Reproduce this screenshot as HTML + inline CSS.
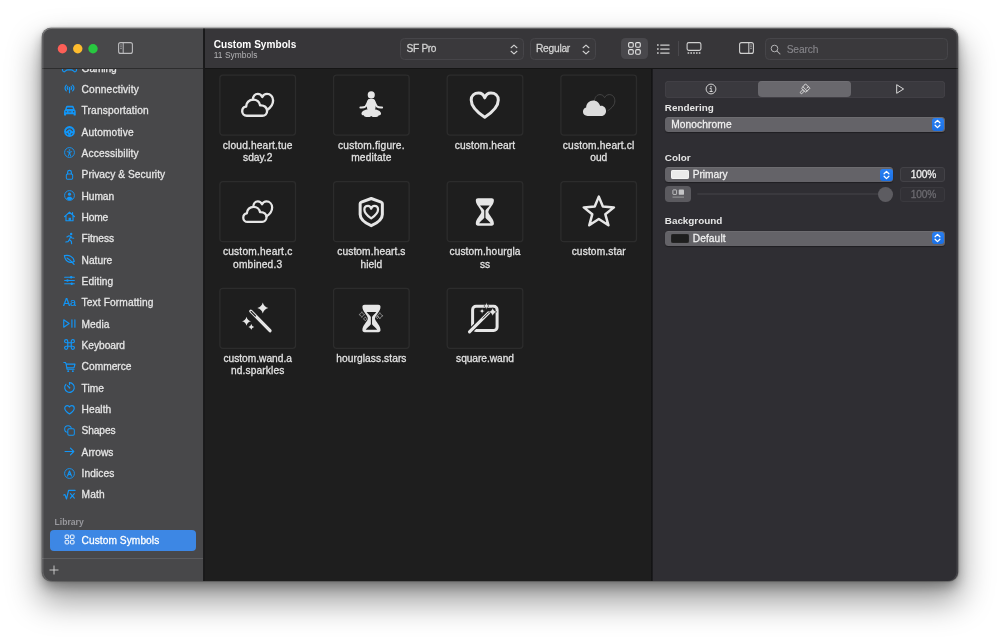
<!DOCTYPE html><html><head><meta charset="utf-8"><title>Custom Symbols</title><style>
*{box-sizing:border-box;margin:0;padding:0}
i{font-style:normal}
.row span,.lbl,.ipop,.tbpop,.fld{-webkit-text-stroke:.28px currentColor}
html,body{width:1000px;height:637px;overflow:hidden;background:#fff}
body{font-family:"Liberation Sans",sans-serif;font-size:10px;color:#e4e4e4;position:relative;-webkit-font-smoothing:antialiased}
.abs{position:absolute}
#win{will-change:transform;position:absolute;left:42px;top:28px;width:916px;height:552.8px;border-radius:9px;background:#1e1e1e;overflow:hidden;}
#shadow{position:absolute;left:42px;top:28px;width:916px;height:552.8px;border-radius:9px;box-shadow:0 18px 32px 3px rgba(0,0,0,.38),0 6px 12px rgba(0,0,0,.3),0 0 3px rgba(0,0,0,.3),0 0 0 .5px rgba(0,0,0,.3);}
#rim{position:absolute;left:42px;top:28px;width:916px;height:552.8px;border-radius:9px;box-shadow:inset 1.5px 0 0 rgba(255,255,255,.15),inset -1.5px 0 0 rgba(255,255,255,.1),inset 0 1px 0 rgba(255,255,255,.22);z-index:20;pointer-events:none}
#side{position:absolute;left:0;top:0;width:161.2px;height:553px;background:#48484a;z-index:2}
#sdiv{position:absolute;left:161px;top:0;width:2px;height:553px;background:linear-gradient(90deg,#3a3a3b 0,#1b1b1c 25%,#19191a 80%,#222223 100%);z-index:3}
#sidetop{position:absolute;left:0;top:0;width:161.2px;height:40.500px;border-bottom:1px solid #2d2d2e;background:#48484a;z-index:3}
.tl{position:absolute;top:16.2px;width:9.400px;height:9.400px;border-radius:50%}
.row{position:absolute;left:0;width:161px;height:21.300px;}
.row svg{position:absolute;left:20.600px;top:3.500px;width:13px;height:13px;overflow:visible}
.row span{position:absolute;left:39.600px;top:0;line-height:21.300px;font-size:10.200px;color:#e6e6e6;white-space:nowrap}
#tb{position:absolute;left:162px;top:0;right:0;height:40.500px;background:#373639;border-bottom:1px solid #151515}
#main{position:absolute;left:162px;top:41px;width:448px;bottom:0;background:#1e1e1e}
#insp{position:absolute;left:610.5px;top:41px;right:0;bottom:0;background:#2f2e33}
#idiv{position:absolute;left:609px;top:41px;width:2px;bottom:0;background:linear-gradient(90deg,#151516 0,#121213 50%,#252429 100%);z-index:3}
.tile{position:absolute;width:76.600px;height:61px;border:1px solid #303030;border-radius:3px;background:#1c1c1c}
.lbl{position:absolute;width:90px;text-align:center;font-size:10.200px;line-height:12.300px;color:#e2e2e2}
.tile svg{position:absolute;left:-1px;top:-1px;width:76.600px;height:61px;overflow:visible}
.pop{position:absolute;border-radius:4px;}
.tbpop{border:1px solid #464549;background:#3a393c;height:21.6px;top:10px;border-radius:4.5px;font-size:10.2px;line-height:19.6px;color:#d2d2d2}
.ipop{height:15px;background:#646368;border-radius:3.500px;font-size:10.200px;line-height:15px;color:#f0f0f0;box-shadow:0 .5px 0 rgba(255,255,255,.12) inset,0 .5px 1px rgba(0,0,0,.35)}
.ibtn{position:absolute;right:.9px;top:1.4px;width:12.4px;height:12.2px;border-radius:3px;background:linear-gradient(#2a80f2,#1a70e6)}
.ih{position:absolute;left:12.3px;font-size:9.900px;font-weight:bold;color:#e6e6e6;letter-spacing:0}
.fld{position:absolute;height:15px;border-radius:3px;background:#36353a;border:1px solid #434247;font-size:10.200px;line-height:14.600px;text-align:right;padding-right:8px;color:#f0f0f0}
</style></head><body>
<div id="shadow"></div><div id="win">
<div id="side">
<div class="row" style="top:29.5px"><svg viewBox="0 0 14 14"><path fill="none" stroke="#1296f7" stroke-width="1.25" stroke-linecap="round" stroke-linejoin="round" stroke-width="1.25" d="M-0.6 8C-0.8 10.5 0 11.7 1.300 11.7C2.600 11.7 3.200 9.500 5 9.500H9C10.800 9.500 11.400 11.7 12.700 11.7C14 11.7 14.800 10.5 14.600 8C14.300 5 13 2.500 11 2.500H3C1 2.500-.3 5-.6 8z"/></svg><span><i style="letter-spacing:-0.112px">Gaming</i></span></div>
<div class="row" style="top:50.9px"><svg viewBox="0 0 14 14"><path fill="none" stroke="#1296f7" stroke-width="1.25" stroke-linecap="round" stroke-linejoin="round" stroke-width="1" d="M7 6.300v5.200M5.200 4.800a2.300 2.300 0 0 0 0 3.200M8.800 4.800a2.300 2.300 0 0 1 0 3.200M3.600 3.300a4.600 4.600 0 0 0 0 6.200M10.400 3.300a4.600 4.600 0 0 1 0 6.200"/><circle cx="7" cy="6.400" r="0.900" fill="#1296f7"/></svg><span><i style="letter-spacing:0.158px">Connectivity</i></span></div>
<div class="row" style="top:72.2px"><svg viewBox="0 0 14 14"><g transform="translate(7.4 7.2) scale(1.086 1.11) translate(-7 -7.5)"><path fill="#1296f7" d="M1.2 11.6V8.2c0-.8.3-1.300.9-1.600l.9-2.500c.3-.9.9-1.300 1.900-1.300h4.200c1 0 1.600.4 1.900 1.300l.9 2.500c.6.3.9.8.9 1.600v3.400c0 .4-.2.600-.6.600h-.9c-.4 0-.6-.2-.6-.6v-.7H3.300v.7c0 .4-.2.600-.6.600h-.9c-.4 0-.6-.2-.6-.6zM3.900 5.900h6.200l-.4-1.100c-.1-.3-.3-.4-.6-.4H4.900c-.3 0-.5.100-.6.400zM3.300 9.300a.7.7 0 1 0 0-1.400.7.7 0 0 0 0 1.400zM10.700 9.300a.7.7 0 1 0 0-1.400.7.7 0 0 0 0 1.400zM5.600 9h2.800v-.7H5.600z" fill-rule="evenodd"/></g></svg><span><i style="letter-spacing:0.135px">Transportation</i></span></div>
<div class="row" style="top:93.5px"><svg viewBox="0 0 14 14"><circle cx="7" cy="7" r="5.85" fill="#1296f7"/><path d="M3.8 6.1A3.5 3.5 0 0 1 10.2 6.1" fill="none" stroke="#48484a" stroke-width="1.25" stroke-linecap="round"/><circle cx="7" cy="7.5" r=".75" fill="#48484a"/><path d="M4.300 9.100L5.200 10.200M9.700 9.100L8.800 10.200" stroke="#48484a" stroke-width="1.1" stroke-linecap="round"/></svg><span><i style="letter-spacing:0.113px">Automotive</i></span></div>
<div class="row" style="top:114.9px"><svg viewBox="0 0 14 14"><circle cx="7" cy="7" r="5.300" fill="none" stroke="#1296f7" stroke-width="1"/><circle cx="7" cy="4.300" r="0.900" fill="#1296f7"/><path fill="#1296f7" d="M4.200 5.600l2.100.3h1.400l2.100-.3v.9l-1.900.4v1.400l.9 2.600-.8.300-1-2.500-1 2.500-.8-.3.900-2.600V6.900l-1.900-.4z"/></svg><span><i style="letter-spacing:0.124px">Accessibility</i></span></div>
<div class="row" style="top:136.2px"><svg viewBox="0 0 14 14"><rect x="3.600" y="6.400" width="6.800" height="5.600" rx="1.100" fill="none" stroke="#1296f7" stroke-width="1.100"/><path fill="none" stroke="#1296f7" stroke-width="1.25" stroke-linecap="round" stroke-linejoin="round" d="M5 6.300V4.500a2 2 0 0 1 4 0v1.800"/></svg><span><i style="letter-spacing:0.052px">Privacy &amp; Security</i></span></div>
<div class="row" style="top:157.6px"><svg viewBox="0 0 14 14"><circle cx="7" cy="7" r="5.300" fill="none" stroke="#1296f7" stroke-width="1"/><circle cx="7" cy="5.600" r="1.700" fill="#1296f7"/><path fill="#1296f7" d="M3.700 10.600c.5-1.600 1.800-2.300 3.300-2.300s2.800.7 3.300 2.300c-.9.900-2 1.400-3.300 1.400s-2.400-.5-3.300-1.400z"/></svg><span><i style="letter-spacing:-0.089px">Human</i></span></div>
<div class="row" style="top:178.9px"><svg viewBox="0 0 14 14"><path fill="none" stroke="#1296f7" stroke-width="1.25" stroke-linecap="round" stroke-linejoin="round" d="M1.600 7.200L7 2.400l5.400 4.800M3.200 6.200v5.400h7.600V6.200M10.300 4.800V2.900"/><path fill="#1296f7" d="M6 11.600V8.300h2.600v3.300z"/></svg><span><i style="letter-spacing:-0.172px">Home</i></span></div>
<div class="row" style="top:200.2px"><svg viewBox="0 0 14 14"><circle cx="8.8" cy="2.2" r="1.3" fill="#1296f7"/><path fill="none" stroke="#1296f7" stroke-width="1.25" stroke-linecap="round" stroke-linejoin="round" stroke-width="1.45" d="M4.2 5.4l2.3-1.300 1.9.7-1.5 3.4 2 1.7.4 2.7M6.9 8.2L5.6 10.3l-2.600.5M8.4 4.8l1.2 1.7 1.9.2"/></svg><span><i style="letter-spacing:-0.063px">Fitness</i></span></div>
<div class="row" style="top:221.6px"><svg viewBox="0 0 14 14"><path fill="none" stroke="#1296f7" stroke-width="1.25" stroke-linecap="round" stroke-linejoin="round" d="M1.5 2.9c4.8-1 9.6.4 10.7 6-1.2 1-3.7 1.5-5.6.9C4 9 2 6.5 1.5 2.900zM4.3 5.4c2.7 1.5 5.3 3.7 7.600 6.9"/></svg><span><i style="letter-spacing:0.004px">Nature</i></span></div>
<div class="row" style="top:242.9px"><svg viewBox="0 0 14 14"><path fill="none" stroke="#1296f7" stroke-width="1.25" stroke-linecap="round" stroke-linejoin="round" d="M1.800 3.500h10.400M1.800 7h10.400M1.800 10.500h10.400"/><circle cx="8.800" cy="3.500" r="1.300" fill="#1296f7"/><circle cx="4.800" cy="7" r="1.300" fill="#1296f7"/><circle cx="9.400" cy="10.500" r="1.300" fill="#1296f7"/></svg><span><i style="letter-spacing:0.063px">Editing</i></span></div>
<div class="row" style="top:264.2px"><svg viewBox="0 0 14 14"><text x="7" y="11.2" text-anchor="middle" font-family="Liberation Sans, sans-serif" font-size="11.5" fill="#1296f7" stroke="#1296f7" stroke-width=".25">Aa</text></svg><span><i style="letter-spacing:0.113px">Text Formatting</i></span></div>
<div class="row" style="top:285.6px"><svg viewBox="0 0 14 14"><path fill="none" stroke="#1296f7" stroke-width="1.25" stroke-linecap="round" stroke-linejoin="round" d="M.8 3l5.8 4-5.8 4z"/><path fill="none" stroke="#1296f7" stroke-width="1.25" stroke-linecap="round" stroke-linejoin="round" stroke-width="1.4" d="M9.6 3v8M12.8 3v8"/></svg><span><i style="letter-spacing:-0.010px">Media</i></span></div>
<div class="row" style="top:306.9px"><svg viewBox="0 0 14 14"><path fill="none" stroke="#1296f7" stroke-width="1.25" stroke-linecap="round" stroke-linejoin="round" stroke-width="1.15" d="M5.1 5.1h3.8v3.8H5.1zM5.1 5.1V3.4a1.7 1.7 0 1 0-1.7 1.7zM8.9 5.1V3.4a1.7 1.7 0 1 1 1.7 1.7zM5.1 8.9v1.7a1.7 1.7 0 1 1-1.7-1.7zM8.9 8.9v1.7a1.7 1.7 0 1 0 1.7-1.7z"/></svg><span><i style="letter-spacing:-0.041px">Keyboard</i></span></div>
<div class="row" style="top:328.3px"><svg viewBox="0 0 14 14"><path fill="none" stroke="#1296f7" stroke-width="1.25" stroke-linecap="round" stroke-linejoin="round" stroke-width="1.3" d="M.9 2.7h1.7l.8 1.7h9.5l-1 3.9H4.2M3.4 4.4l1 5.6h7.5"/><circle cx="5.6" cy="12" r="1.05" fill="#1296f7"/><circle cx="10.600" cy="12" r="1.05" fill="#1296f7"/></svg><span><i style="letter-spacing:0.009px">Commerce</i></span></div>
<div class="row" style="top:349.6px"><svg viewBox="0 0 14 14"><path fill="none" stroke="#1296f7" stroke-width="1.25" stroke-linecap="round" stroke-linejoin="round" d="M7 1.8a5.2 5.2 0 1 1-3.9 1.76"/><path fill="none" stroke="#1296f7" stroke-width="1.25" stroke-linecap="round" stroke-linejoin="round" d="M7 1.8v2.1M7 7.2L4.7 4.9"/><circle cx="7" cy="7.2" r=".9" fill="#1296f7"/></svg><span><i style="letter-spacing:-0.016px">Time</i></span></div>
<div class="row" style="top:371.0px"><svg viewBox="0 0 14 14"><path fill="none" stroke="#1296f7" stroke-width="1.25" stroke-linecap="round" stroke-linejoin="round" d="M7 11.800C3.600 9.600 1.900 7.700 1.900 5.600c0-1.600 1.200-2.800 2.700-2.800 1 0 1.900.5 2.400 1.400.5-.9 1.400-1.400 2.400-1.400 1.500 0 2.700 1.200 2.700 2.800 0 2.100-1.700 4-5.100 6.200z"/></svg><span><i style="letter-spacing:0.024px">Health</i></span></div>
<div class="row" style="top:392.3px"><svg viewBox="0 0 14 14"><circle cx="5.400" cy="5.400" r="3.600" fill="none" stroke="#1296f7" stroke-width="1.100"/><rect x="5.200" y="5.200" width="7" height="7" rx="1.400" fill="#48484a" stroke="#1296f7" stroke-width="1.100"/></svg><span><i style="letter-spacing:-0.127px">Shapes</i></span></div>
<div class="row" style="top:413.6px"><svg viewBox="0 0 14 14"><path fill="none" stroke="#1296f7" stroke-width="1.25" stroke-linecap="round" stroke-linejoin="round" d="M2.200 7h9.400M8 3.400L11.600 7 8 10.600"/></svg><span><i style="letter-spacing:0.033px">Arrows</i></span></div>
<div class="row" style="top:435.0px"><svg viewBox="0 0 14 14"><circle cx="7" cy="7" r="5.300" fill="none" stroke="#1296f7" stroke-width="1"/><path fill="none" stroke="#1296f7" stroke-width="1.25" stroke-linecap="round" stroke-linejoin="round" stroke-width="1" d="M4.900 9.600L7 4.300l2.100 5.300M5.600 8h2.800"/></svg><span><i style="letter-spacing:0.074px">Indices</i></span></div>
<div class="row" style="top:456.3px"><svg viewBox="0 0 14 14"><path fill="none" stroke="#1296f7" stroke-width="1.25" stroke-linecap="round" stroke-linejoin="round" d="M.8 7.6l1.3-.5 1.7 4.7L6 2.6h7"/><path fill="none" stroke="#1296f7" stroke-width="1.25" stroke-linecap="round" stroke-linejoin="round" stroke-width="1.1" d="M8 6l4.2 4.9M12.2 6L8 10.9"/></svg><span><i style="letter-spacing:0.136px">Math</i></span></div>
<div class="abs" style="left:12.500px;top:489.300px;font-size:8.600px;color:#98989d;font-weight:bold"><i style="letter-spacing:0.008px">Library</i></div>
<div class="abs" style="left:8px;top:501.500px;width:146px;height:21.500px;border-radius:4px;background:#3d87e4"></div>
<div class="row" style="top:501.800px"><svg viewBox="0 0 14 14"><g fill="none" stroke="#fff" stroke-width="1.05"><rect x="2.3" y="2.2" width="3.9" height="3.9" rx=".9"/><rect x="8" y="2.2" width="3.9" height="3.9" rx=".9"/><rect x="2.3" y="7.9" width="3.9" height="3.9" rx=".9"/><rect x="8" y="7.9" width="3.9" height="3.9" rx=".9"/></g></svg><span style="color:#fff"><i style="letter-spacing:0.050px">Custom Symbols</i></span></div>
<div class="abs" style="left:0;top:530.400px;width:161px;height:1px;background:#5c5c5e"></div>
<svg class="abs" style="left:6.600px;top:537px;width:10px;height:10px" viewBox="0 0 10 10"><path d="M5 .9v8.200M.9 5h8.200" stroke="#dadada" stroke-width=".85" fill="none" stroke-linecap="round"/></svg>
</div>
<div id="sidetop">
<svg class="abs" style="left:10px;top:10px;width:60px;height:22px" viewBox="0 0 60 22"><circle cx="10.4" cy="10.7" r="4.7" fill="#fd5f57"/><circle cx="25.75" cy="10.7" r="4.7" fill="#febc2e"/><circle cx="41" cy="10.7" r="4.700" fill="#28c840"/></svg>
<svg class="abs" style="left:75.500px;top:14px;width:15px;height:12px" viewBox="0 0 15 12"><rect x=".6" y=".6" width="13.800" height="10.800" rx="2" fill="none" stroke="#bcbcbe" stroke-width="1.100"/><path d="M5.200.6v10.800" stroke="#bcbcbe" stroke-width="1"/><path d="M2.200 3h1.600M2.200 4.800h1.600M2.200 6.600h1.600" stroke="#bcbcbe" stroke-width=".7"/></svg>
</div>
<div id="tb">
<div class="abs" style="left:9.7px;top:10.7px;font-size:10.05px;font-weight:bold;color:#fff;white-space:nowrap"><i style="letter-spacing:0.037px">Custom Symbols</i></div>
<div class="abs" style="left:9.700px;top:21.500px;font-size:8.400px;color:#b4b4b6;white-space:nowrap"><i style="letter-spacing:0.066px">11 Symbols</i></div>
<div class="pop tbpop" style="left:196px;width:123.500px;padding-left:5.6px"><i style="letter-spacing:-0.351px">SF Pro</i><svg class="abs" style="right:4.8px;top:4.5px;width:8px;height:11px" viewBox="0 0 8 11"><path d="M1.1 3.7L4 1.1l2.9 2.6M1.1 7.3L4 9.9l2.9-2.600" fill="none" stroke="#d0d0d0" stroke-width="1.15" stroke-linecap="round" stroke-linejoin="round"/></svg></div>
<div class="pop tbpop" style="left:326px;width:66px;padding-left:5px"><i style="letter-spacing:-0.241px">Regular</i><svg class="abs" style="right:4.8px;top:4.5px;width:8px;height:11px" viewBox="0 0 8 11"><path d="M1.1 3.7L4 1.1l2.9 2.6M1.1 7.3L4 9.9l2.9-2.600" fill="none" stroke="#d0d0d0" stroke-width="1.15" stroke-linecap="round" stroke-linejoin="round"/></svg></div>
<div class="abs" style="left:416.900px;top:10.200px;width:27.200px;height:20.700px;border-radius:4.500px;background:#49484c"></div>
<svg class="abs" style="left:424px;top:13.900px;width:13px;height:13px" viewBox="0 0 13 13"><g fill="none" stroke="#e4e4e4" stroke-width="1.100"><rect x=".65" y=".65" width="4.600" height="4.600" rx="1.200"/><rect x="7.650" y=".65" width="4.600" height="4.600" rx="1.200"/><rect x=".65" y="7.650" width="4.600" height="4.600" rx="1.200"/><rect x="7.650" y="7.650" width="4.600" height="4.600" rx="1.200"/></g></svg>
<svg class="abs" style="left:452px;top:13.500px;width:14px;height:14px" viewBox="0 0 14 14"><path d="M4.700 3h8.400M4.700 7h8.400M4.700 11h8.400" stroke="#d0d0d0" stroke-width="1.250" stroke-linecap="round"/><rect x="1" y="2.200" width="1.700" height="1.600" rx=".4" fill="#d0d0d0"/><rect x="1" y="6.200" width="1.700" height="1.600" rx=".4" fill="#d0d0d0"/><rect x="1" y="10.200" width="1.700" height="1.600" rx=".4" fill="#d0d0d0"/></svg>
<div class="abs" style="left:473.800px;top:13px;width:1px;height:15px;background:#4a494d"></div>
<svg class="abs" style="left:481.800px;top:13.200px;width:16px;height:14px" viewBox="0 0 16 14"><rect x="1.100" y="1.600" width="13.800" height="7.800" rx="1.600" fill="none" stroke="#d0d0d0" stroke-width="1.100"/><path d="M1.600 12h1.600M4.400 12h1.600M7.200 12h1.600M10 12h1.600M12.800 12h1.600" stroke="#d0d0d0" stroke-width="1.300"/></svg>
<svg class="abs" style="left:534.500px;top:14px;width:15px;height:12px" viewBox="0 0 15 12"><rect x=".6" y=".6" width="13.800" height="10.800" rx="2" fill="none" stroke="#d0d0d0" stroke-width="1.100"/><path d="M9.800.6v10.800" stroke="#d0d0d0" stroke-width="1"/><path d="M11.200 3h1.600M11.200 4.800h1.600M11.200 6.600h1.600" stroke="#d0d0d0" stroke-width=".7"/></svg>
<div class="pop tbpop" style="left:561.200px;width:183px;padding-left:20.5px;line-height:22.4px;color:#87868b;-webkit-text-stroke:.1px #87868b"><i style="letter-spacing:-0.114px">Search</i><svg class="abs" style="left:3.6px;top:4.5px;width:11px;height:11px" viewBox="0 0 11 11"><circle cx="4.5" cy="4.5" r="3.3" fill="none" stroke="#b2b2b4" stroke-width="1"/><path d="M7 7l3 3" stroke="#b2b2b4" stroke-width="1.05" stroke-linecap="round"/></svg></div>
</div>
<div id="main">
<div class="lbl" style="left:8.7px;top:70.7px"><i style="letter-spacing:0.153px">cloud.heart.tue</i><br><i style="letter-spacing:0.006px">sday.2</i></div>
<div class="lbl" style="left:122.4px;top:70.7px"><i style="letter-spacing:0.194px">custom.figure.</i><br><i style="letter-spacing:0.153px">meditate</i></div>
<div class="lbl" style="left:236.0px;top:70.7px"><i style="letter-spacing:0.151px">custom.heart</i></div>
<div class="lbl" style="left:349.7px;top:70.7px"><i style="letter-spacing:0.175px">custom.heart.cl</i><br><i style="letter-spacing:-0.100px">oud</i></div>
<div class="lbl" style="left:8.7px;top:177.3px"><i style="letter-spacing:0.192px">custom.heart.c</i><br><i style="letter-spacing:0.191px">ombined.3</i></div>
<div class="lbl" style="left:122.4px;top:177.3px"><i style="letter-spacing:0.113px">custom.heart.s</i><br><i style="letter-spacing:0.054px">hield</i></div>
<div class="lbl" style="left:236.0px;top:177.3px"><i style="letter-spacing:0.103px">custom.hourgla</i><br><i style="letter-spacing:-0.144px">ss</i></div>
<div class="lbl" style="left:349.7px;top:177.3px"><i style="letter-spacing:0.131px">custom.star</i></div>
<div class="lbl" style="left:8.7px;top:283.9px"><i style="letter-spacing:0.005px">custom.wand.a</i><br><i style="letter-spacing:0.126px">nd.sparkles</i></div>
<div class="lbl" style="left:122.4px;top:283.9px"><i style="letter-spacing:0.080px">hourglass.stars</i></div>
<div class="lbl" style="left:236.0px;top:283.9px"><i style="letter-spacing:-0.049px">square.wand</i></div>
<svg class="abs" style="left:0;top:0;width:448px;height:400px" viewBox="0 0 448 400"><g transform="translate(15.40 5.60)"><rect x=".5" y=".5" width="75.600" height="60" rx="2.800" fill="none" stroke="#2c2c2c" stroke-width="1.300"/><path fill="none" stroke="#e6e6e6" stroke-width="2.4" stroke-linecap="round" stroke-linejoin="round" d="M33.5 25.0C33.6 21.8 35.5 19.300 38.4 19.300C40.3 19.300 41.9 20.4 42.9 22.4C43.9 20.4 45.6 19.300 47.6 19.300C51 19.300 53.7 22 53.7 25.800C53.7 29.5 51.6 32.6 47.7 35.300"/><path fill="none" stroke="#e6e6e6" stroke-width="2.4" stroke-linecap="round" stroke-linejoin="round" d="M27.3 41.1H43C45.6 41.1 47.7 39 47.7 36.300C47.7 33 45 30.4 40.700 30.8C40.2 27.4 37.4 25 33.8 25C29.8 25 26.8 28 26.700 32C24.4 32.3 22.8 34.2 22.8 36.6C22.8 39.1 24.8 41.1 27.3 41.1z"/></g><g transform="translate(129.05 5.60)"><rect x=".5" y=".5" width="75.600" height="60" rx="2.800" fill="none" stroke="#2c2c2c" stroke-width="1.300"/><circle cx="38.2" cy="20.3" r="3.55" fill="#e6e6e6"/><path fill="#e6e6e6" d="M35.4 24.9C36.6 23.8 39.8 23.8 41 24.9C42.3 26.2 42.6 29 42.6 31.5C42.6 33.4 42.2 34.9 41.6 36H34.8C34.2 34.9 33.8 33.4 33.8 31.5C33.8 29 34.1 26.2 35.4 24.9z"/><path fill="none" stroke="#e6e6e6" stroke-width="2.1" stroke-linecap="round" stroke-linejoin="round" d="M36 25.6C34.4 27.6 34 30.4 32.4 31.9C31.2 32.9 29.300 33 27.4 32.9M40.4 25.6C42 27.600 42.4 30.4 44 31.900C45.2 32.9 47.1 33 49 32.9"/><path fill="#e6e6e6" d="M33.3 34.9C30.8 35.6 28.4 37 28.4 38.9C28.4 40.2 29.4 40.9 30.7 40.7C31 41.800 32 42.3 33.2 42.3H36.600C37.3 42.3 37.900 42.0 38.2 41.5C38.5 42.0 39.100 42.3 39.8 42.3H43.2C44.4 42.3 45.4 41.800 45.7 40.7C47 40.9 48 40.200 48 38.9C48 37 45.600 35.6 43.1 34.9z"/></g><g transform="translate(242.70 5.60)"><rect x=".5" y=".5" width="75.600" height="60" rx="2.800" fill="none" stroke="#2c2c2c" stroke-width="1.300"/><path fill="none" stroke="#e6e6e6" stroke-width="3.0" stroke-linecap="round" stroke-linejoin="round" d="M38.05 42.70C33.98 40.03 24.50 33.22 24.50 25.45C24.50 21.07 27.75 18.40 31.82 18.40C34.53 18.40 36.97 19.86 38.05 23.30C39.13 19.86 41.57 18.40 44.28 18.40C48.35 18.40 51.60 21.07 51.60 25.45C51.60 33.22 42.11 40.03 38.05 42.70z"/></g><g transform="translate(356.35 5.60)"><rect x=".5" y=".5" width="75.600" height="60" rx="2.800" fill="none" stroke="#2c2c2c" stroke-width="1.300"/><path fill="none" stroke="#4e4e4e" stroke-width=".8" d="M34.2 26.5C34.2 22.9 36.4 20 39.6 20C41.6 20 43.3 21.1 44.3 23C45.3 21.1 47 20 49 20C52.2 20 54.5 22.700 54.5 26.2C54.5 29.9 52.2 33 47.3 36.2"/><path fill="#dcdcdc" d="M27.2 41.4H41.1C43.7 41.4 45.7 39.2 45.7 36.4C45.7 33.5 43.6 31.2 41 31.2C40.6 31.2 40.2 31.25 39.8 31.35C38.800 28.2 36.1 26 32.9 26C28.9 26 25.9 29.1 25.8 33C23.9 33.5 22.6 35.2 22.6 37.2C22.6 39.5 24.6 41.4 27.2 41.4z"/></g><g transform="translate(15.40 112.20)"><rect x=".5" y=".5" width="75.600" height="60" rx="2.800" fill="none" stroke="#2c2c2c" stroke-width="1.300"/><g transform="translate(38.3 30.4) scale(.935) translate(-38.25 -30.15)"><path fill="none" stroke="#e6e6e6" stroke-width="2.4" stroke-linecap="round" stroke-linejoin="round" d="M33.5 25.0C33.6 21.8 35.5 19.300 38.4 19.300C40.3 19.300 41.9 20.4 42.9 22.4C43.9 20.4 45.6 19.300 47.6 19.300C51 19.300 53.7 22 53.7 25.800C53.7 29.5 51.6 32.6 47.7 35.300"/><path fill="none" stroke="#e6e6e6" stroke-width="2.4" stroke-linecap="round" stroke-linejoin="round" d="M27.3 41.1H43C45.6 41.1 47.7 39 47.7 36.300C47.7 33 45 30.4 40.700 30.8C40.2 27.4 37.4 25 33.8 25C29.8 25 26.8 28 26.700 32C24.4 32.3 22.8 34.2 22.8 36.6C22.8 39.1 24.8 41.1 27.3 41.1z"/></g></g><g transform="translate(129.05 112.20)"><rect x=".5" y=".5" width="75.600" height="60" rx="2.800" fill="none" stroke="#2c2c2c" stroke-width="1.300"/><path fill="none" stroke="#e6e6e6" stroke-width="3.0" stroke-linecap="round" stroke-linejoin="round" stroke-linejoin="round" d="M38.2 17.300L48.1 20.9C48.9 21.2 49.300 21.8 49.300 22.6V33.2C49.300 37.6 45.4 41.2 38.2 44.5C31 41.2 27.1 37.6 27.1 33.2V22.6C27.1 21.8 27.5 21.2 28.3 20.9z"/><path fill="none" stroke="#e6e6e6" stroke-width="2.25" stroke-linecap="round" stroke-linejoin="round" d="M38.15 37.20C36.09 35.83 31.30 32.33 31.30 28.32C31.30 26.07 32.94 24.70 35.00 24.70C36.37 24.70 37.60 25.45 38.15 27.40C38.70 25.45 39.93 24.70 41.30 24.70C43.36 24.70 45.00 26.07 45.00 28.32C45.00 32.33 40.20 35.83 38.15 37.20z"/></g><g transform="translate(242.70 112.20)"><rect x=".5" y=".5" width="75.600" height="60" rx="2.800" fill="none" stroke="#2c2c2c" stroke-width="1.300"/><path fill="#e6e6e6" fill-rule="evenodd" d="M31.30 16.95H45.00C46.40 16.95 47.20 17.85 47.20 19.15C47.20 23.85 42.60 26.85 41.60 30.70C42.60 34.55 47.20 37.55 47.20 42.25C47.20 43.55 46.40 44.45 45.00 44.45H31.30C29.90 44.45 29.10 43.55 29.10 42.25C29.10 37.55 33.70 34.55 34.70 30.70C33.70 26.85 29.10 23.85 29.10 19.15C29.10 17.85 29.90 16.95 31.30 16.95zM33.30 24.35H43.00C41.60 26.35 39.20 27.95 38.75 29.35V36.55C39.60 38.15 42.60 39.95 43.90 41.95H32.40C33.70 39.95 36.70 38.15 37.55 36.55V29.35C37.10 27.95 34.70 26.35 33.30 24.35z"/></g><g transform="translate(356.35 112.20)"><rect x=".5" y=".5" width="75.600" height="60" rx="2.800" fill="none" stroke="#2c2c2c" stroke-width="1.300"/><path fill="none" stroke="#e6e6e6" stroke-width="2.5" stroke-linecap="round" stroke-linejoin="round" d="M38.45 15.4L42.5 25.3L53.6 26.2L45 33.1L48.1 44.1L38.45 37.800L28.9 44.1L31.9 33.1L23.4 26.200L34.4 25.3z"/></g><g transform="translate(15.40 218.80)"><rect x=".5" y=".5" width="75.600" height="60" rx="2.800" fill="none" stroke="#2c2c2c" stroke-width="1.300"/><path d="M31.4 23.4L50.6 42.9" stroke="#e6e6e6" stroke-width="3.300" stroke-linecap="round" fill="none"/><path d="M31.7 23.7L36.1 28.2" stroke="#1e1e1e" stroke-width="1.100" stroke-linecap="round" fill="none"/><path fill="#e6e6e6" d="M43.40 14.80Q44.50 19.20 48.90 20.30Q44.50 21.40 43.40 25.80Q42.30 21.40 37.90 20.30Q42.30 19.20 43.40 14.80zM27.10 29.00Q28.00 32.60 31.60 33.50Q28.00 34.40 27.10 38.00Q26.20 34.40 22.60 33.50Q26.20 32.60 27.10 29.00zM31.90 36.20Q32.48 38.52 34.80 39.10Q32.48 39.68 31.90 42.00Q31.32 39.68 29.00 39.10Q31.32 38.52 31.90 36.20z"/></g><g transform="translate(129.05 218.80)"><rect x=".5" y=".5" width="75.600" height="60" rx="2.800" fill="none" stroke="#2c2c2c" stroke-width="1.300"/><path fill="#e6e6e6" fill-rule="evenodd" d="M31.55 16.85H45.25C46.65 16.85 47.45 17.75 47.45 19.05C47.45 23.75 42.85 26.75 41.85 30.60C42.85 34.45 47.45 37.45 47.45 42.15C47.45 43.45 46.65 44.35 45.25 44.35H31.55C30.15 44.35 29.35 43.45 29.35 42.15C29.35 37.45 33.95 34.45 34.95 30.60C33.95 26.75 29.35 23.75 29.35 19.05C29.35 17.75 30.15 16.85 31.55 16.85zM33.55 24.25H43.25C41.85 26.25 39.45 27.85 39.00 29.25V36.45C39.85 38.05 42.85 39.85 44.15 41.85H32.65C33.95 39.85 36.95 38.05 37.80 36.45V29.25C37.35 27.85 34.95 26.25 33.55 24.25z"/><path fill="none" stroke="#a8a8a8" stroke-width=".65" d="M28.80 23.90Q29.38 26.22 31.70 26.80Q29.38 27.38 28.80 29.70Q28.22 27.38 25.90 26.80Q28.22 26.22 28.80 23.90zM32.30 29.00Q32.72 30.68 34.40 31.10Q32.72 31.52 32.30 33.20Q31.88 31.52 30.20 31.10Q31.88 30.68 32.30 29.00zM46.80 24.80Q47.44 27.36 50.00 28.00Q47.44 28.64 46.80 31.20Q46.16 28.64 43.60 28.00Q46.16 27.36 46.80 24.80zM44.30 27.80Q44.62 29.08 45.90 29.40Q44.62 29.72 44.30 31.00Q43.98 29.72 42.70 29.40Q43.98 29.08 44.30 27.80z"/></g><g transform="translate(242.70 218.80)"><rect x=".5" y=".5" width="75.600" height="60" rx="2.800" fill="none" stroke="#2c2c2c" stroke-width="1.300"/><rect x="25.9" y="18.500" width="24.5" height="24.1" rx="3.400" fill="none" stroke="#e6e6e6" stroke-width="3.0" stroke-linecap="round" stroke-linejoin="round"/><path d="M22.8 44.1L42.1 24.8" stroke="#1e1e1e" stroke-width="5.200" stroke-linecap="round" fill="none"/><path d="M22.8 44.1L42.1 24.8" stroke="#e6e6e6" stroke-width="3.100" stroke-linecap="round" fill="none"/><path d="M36.3 30.5L41.7 25.1" stroke="#1e1e1e" stroke-width="1.000" stroke-linecap="round" fill="none"/><path fill="#e6e6e6" stroke="#1e1e1e" stroke-width=".5" d="M39.70 14.60Q40.22 17.48 42.30 18.20Q40.22 18.92 39.70 21.80Q39.18 18.92 37.10 18.20Q39.18 17.48 39.70 14.60zM35.40 20.70Q35.92 22.78 38.00 23.30Q35.92 23.82 35.40 25.90Q34.88 23.82 32.80 23.30Q34.88 22.78 35.40 20.70zM46.00 19.90Q46.84 23.26 50.20 24.10Q46.84 24.94 46.00 28.30Q45.16 24.94 41.80 24.10Q45.16 23.26 46.00 19.90z"/></g></svg>
</div>
<div id="sdiv"></div><div id="idiv"></div><div id="insp">
<div class="abs" style="left:12.5px;top:12px;width:280px;height:16.500px;border-radius:4px;background:#3a393e;box-shadow:0 0 0 .5px #48474c inset"></div>
<div class="abs" style="left:105.500px;top:12.200px;width:93px;height:16.100px;border-radius:4px;background:#69686d;box-shadow:0 .5px 0 rgba(255,255,255,.1) inset"></div>
<svg class="abs" style="left:52.400px;top:14.200px;width:12px;height:12px" viewBox="0 0 12 12"><circle cx="6" cy="6" r="4.900" fill="none" stroke="#e0e0e0" stroke-width=".9"/><circle cx="6" cy="3.700" r=".75" fill="#e0e0e0"/><path d="M5.100 5.400h1.100v3M4.900 8.500h2.400" stroke="#e0e0e0" stroke-width=".9" fill="none" stroke-linecap="round" stroke-linejoin="round"/></svg>
<svg class="abs" style="left:144.700px;top:14.200px;width:14px;height:14px;overflow:visible" viewBox="0 0 14 14"><g transform="translate(7.200 6.800) rotate(45) scale(.84) translate(-6 -7.100)" fill="none" stroke="#e0e0e0" stroke-width="1.050" stroke-linejoin="round" stroke-linecap="round"><path d="M2.500 1h7v6.300a.8.800 0 0 1-.8.800H3.300a.8.800 0 0 1-.8-.8z"/><path d="M2.500 5.600h7M6.900 1v2.300M4.800 8.100v3.700a1.200 1.200 0 0 0 2.400 0V8.100"/></g></svg>
<svg class="abs" style="left:241.500px;top:14.200px;width:12px;height:12px" viewBox="0 0 12 12"><path d="M2.700 1.700v8.600l6.900-4.300z" fill="none" stroke="#e0e0e0" stroke-width=".95" stroke-linejoin="round"/></svg>
<div class="ih" style="top:32.700px"><i style="letter-spacing:0.017px">Rendering</i></div>
<div class="pop ipop" style="left:12.5px;top:48px;width:280px;padding-left:6.200px"><i style="letter-spacing:0.103px">Monochrome</i><div class="ibtn"><svg style="position:absolute;left:2.7px;top:1.1px;width:7px;height:10px" viewBox="0 0 7 10"><path d="M1.1 3.8L3.5 1.400l2.400 2.400M1.1 6.2L3.5 8.600l2.400-2.400" fill="none" stroke="#fff" stroke-width="1.25" stroke-linecap="round" stroke-linejoin="round"/></svg></div></div>
<div class="ih" style="top:82.900px"><i style="letter-spacing:0.021px">Color</i></div>
<div class="pop ipop" style="left:12.5px;top:98.200px;width:228.4px;padding-left:27.700px"><div class="abs" style="left:6px;top:3px;width:17.8px;height:9.2px;border-radius:2.200px;background:#ebebeb;box-shadow:0 0 0 .5px #fff inset"></div><i style="letter-spacing:-0.013px">Primary</i><div class="ibtn"><svg style="position:absolute;left:2.7px;top:1.1px;width:7px;height:10px" viewBox="0 0 7 10"><path d="M1.1 3.8L3.5 1.400l2.400 2.400M1.1 6.2L3.5 8.600l2.400-2.400" fill="none" stroke="#fff" stroke-width="1.25" stroke-linecap="round" stroke-linejoin="round"/></svg></div></div>
<div class="fld" style="left:247.700px;top:98.200px;width:45px"><i style="letter-spacing:-0.141px">100%</i></div>
<div class="abs" style="left:12.5px;top:117.200px;width:26px;height:15.500px;border-radius:3.800px;background:#5b5a5f"></div>
<svg class="abs" style="left:19.600px;top:120px;width:13px;height:10px" viewBox="0 0 13 10"><rect x=".9" y=".9" width="3.700" height="4.500" rx=".5" fill="none" stroke="#c8c8ca" stroke-width=".9"/><rect x="6.700" y=".5" width="5.300" height="5.300" rx=".9" fill="#c4c4c6"/><path d="M.5 8.100h11.500" stroke="#a8a8aa" stroke-width=".8"/></svg>
<div class="abs" style="left:44.500px;top:124px;width:196px;height:1.800px;border-radius:1px;background:#3a393e"></div>
<div class="abs" style="left:225.300px;top:117.600px;width:15.200px;height:15.200px;border-radius:50%;background:#5d5c61"></div>
<div class="fld" style="left:247.700px;top:117.500px;width:45px;color:#6c6b70;background:#323136;border-color:#3a393e"><i style="letter-spacing:-0.141px">100%</i></div>
<div class="ih" style="top:146px"><i style="letter-spacing:-0.013px">Background</i></div>
<div class="pop ipop" style="left:12.5px;top:161.500px;width:280px;padding-left:27.700px"><div class="abs" style="left:6px;top:3px;width:17.8px;height:9.2px;border-radius:2.200px;background:#1e1e1e;box-shadow:0 0 0 .5px #2a2a2a inset"></div><i style="letter-spacing:0.103px">Default</i><div class="ibtn"><svg style="position:absolute;left:2.7px;top:1.1px;width:7px;height:10px" viewBox="0 0 7 10"><path d="M1.1 3.8L3.5 1.400l2.400 2.400M1.1 6.2L3.5 8.600l2.400-2.400" fill="none" stroke="#fff" stroke-width="1.25" stroke-linecap="round" stroke-linejoin="round"/></svg></div></div>
</div>
</div><div id="rim"></div></body></html>
